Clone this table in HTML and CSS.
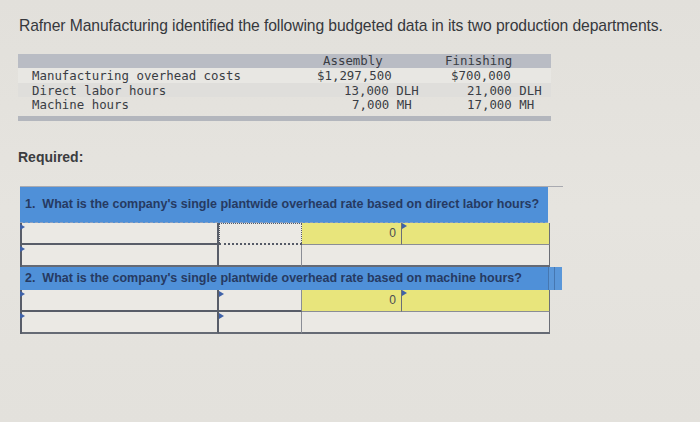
FILE: index.html
```html
<!DOCTYPE html>
<html>
<head>
<meta charset="utf-8">
<link rel="stylesheet" href="styles.css">
</head>
<body>
<p class="title">Rafner Manufacturing identified the following budgeted data in its two production departments.</p>

<div class="data">
  <div class="data-head">
    <span class="c-label"></span>
    <span class="c-asm i-asm-h">Assembly</span>
    <span class="c-fin i-fin-h">Finishing</span>
  </div>
  <div class="data-row">
    <span class="c-label">Manufacturing overhead costs</span>
    <span class="c-asm i-asm-1">$1,297,500</span>
    <span class="c-fin i-fin-1">$700,000</span>
  </div>
  <div class="data-row">
    <span class="c-label">Direct labor hours</span>
    <span class="c-asm i-asm-2">13,000 DLH</span>
    <span class="c-fin i-fin-2">21,000 DLH</span>
  </div>
  <div class="data-row">
    <span class="c-label">Machine hours</span>
    <span class="c-asm i-asm-3">7,000 MH</span>
    <span class="c-fin i-fin-3">17,000 MH</span>
  </div>
  <div class="data-foot"></div>
</div>

<p class="required">Required:</p>

<div class="question q1">
  <div class="q-head q-head-tall">1.&nbsp; What is the company's single plantwide overhead rate based on direct labor hours?</div>
  <div class="q-grid">
    <div class="cell c1 light-bottom marker"></div>
    <div class="cell c2 focus"></div>
    <div class="cell c3 yellow">0</div>
    <div class="cell c4 yellow marker"></div>
    <div class="cell c1 marker last"></div>
    <div class="cell c2 marker-off last"></div>
    <div class="cell c34 last"></div>
  </div>
</div>

<div class="question q2">
  <div class="q-head-wrap">
    <div class="q-head">2.&nbsp; What is the company's single plantwide overhead rate based on machine hours?</div>
    <div class="q-head-extra"><span></span><span></span></div>
  </div>
  <div class="q-grid">
    <div class="cell c1 marker"></div>
    <div class="cell c2 marker"></div>
    <div class="cell c3 yellow">0</div>
    <div class="cell c4 yellow marker"></div>
    <div class="cell c1 marker last"></div>
    <div class="cell c2 marker last"></div>
    <div class="cell c34 last"></div>
  </div>
</div>
</body>
</html>
```

FILE: styles.css
```css
html, body {
  margin: 0;
  padding: 0;
}
body {
  width: 700px;
  height: 422px;
  overflow: hidden;
  background: linear-gradient(180deg, #e2e0db 0%, #e6e4df 50%, #e3e1dc 100%);
  font-family: "Liberation Sans", Arial, sans-serif;
  color: #333;
}
.title {
  margin: 0;
  padding: 17px 0 0 19px;
  font-size: 15.7px;
  line-height: 18px;
  color: #36383d;
  letter-spacing: -0.1px;
}

/* data table */
.data {
  margin: 19px 0 0 18px;
  width: 533px;
  font-family: "DejaVu Sans Mono", monospace;
  font-size: 12.4px;
  color: #3a3d44;
}
.data-head, .data-row {
  display: grid;
  grid-template-columns: 282px 130px 121px;
  height: 14.5px;
  line-height: 14.5px;
  white-space: pre;
}
.data-head {
  background: #b9bcc4;
  height: 14px;
  line-height: 13px;
}
.data-row {
  line-height: 16px;
}
.data-row:nth-of-type(2) {
  background: #e8e7e3;
}
.data-row:nth-of-type(3) {
  background: #dfdedb;
}
.c-label {
  padding-left: 14px;
}
.i-asm-h { padding-left: 23px; }
.i-asm-1 { padding-left: 17px; }
.i-asm-2 { padding-left: 44px; }
.i-asm-3 { padding-left: 52px; }
.i-fin-h { padding-left: 15px; }
.i-fin-1 { padding-left: 21px; }
.i-fin-2 { padding-left: 37px; }
.i-fin-3 { padding-left: 37px; }
.data-foot {
  margin-top: 4px;
  height: 5px;
  background: #b3b6bd;
}

.required {
  margin: 28px 0 0 18px;
  font-size: 14px;
  font-weight: bold;
  color: #3b3c40;
  line-height: 16px;
}

/* questions */
.question {
  margin-left: 20px;
  width: 528px;
}
.q1 {
  margin-top: 21px;
  border-top: 1px solid #a9aab0;
  width: 543px;
}
.q1 .q-head, .q1 .q-grid {
  width: 528px;
}
.q-head {
  background: #4f90d8;
  color: #263a62;
  font-weight: bold;
  font-size: 12.5px;
  padding-left: 5px;
  box-sizing: border-box;
  height: 23px;
  line-height: 23px;
  white-space: nowrap;
  overflow: hidden;
}
.q-head-tall {
  height: 36px;
  line-height: 35px;
  border-bottom: 1px dashed #8aa0c0;
}
.q-head-wrap {
  display: flex;
  width: 542px;
}
.q-head-wrap .q-head {
  width: 528px;
  flex: none;
}
.q-head-extra {
  flex: 1;
  background: #5a97d9;
  display: flex;
  gap: 5px;
}
.q-head-extra span {
  width: 1px;
  background: #4677b0;
}
.q-grid {
  display: grid;
  grid-template-columns: 197px 83px 100px 148px;
  grid-auto-rows: 22px;
  border-left: 2px solid #585d68;
  box-sizing: border-box;
}
.cell {
  position: relative;
  background: #ebe9e4;
  border-right: 1px solid #8a8d95;
  border-bottom: 2px solid #585d68;
  box-sizing: border-box;
}
.c1 {
  border-right: 2px solid #585d68;
}
.c3 {
  text-align: right;
  padding-right: 5px;
  font-size: 12px;
  line-height: 20px;
  color: #4a4c52;
  border-right: 1.5px solid #6b6e76;
  border-bottom: 1px solid #8a8d95;
}
.c4 {
  border-bottom: 1px solid #8a8d95;
  border-right: 1.5px solid #6b6e76;
}
.c34 {
  grid-column: span 2;
  border-right: 1.5px solid #6b6e76;
}
.yellow {
  background: #e8e57c;
}
.light-bottom {
  border-bottom: 2px solid #585d68;
}
.focus {
  border: 1px dotted #555a66;
  border-bottom: 2px dotted #555a66;
}
.last {
  border-bottom: 2px solid #656a74;
}
.marker::before {
  content: "";
  position: absolute;
  left: 0;
  top: 1px;
  border-left: 5px solid #3f62a8;
  border-top: 3px solid transparent;
  border-bottom: 3px solid transparent;
}
.c1.marker::before {
  left: -2px;
}
.c4.marker::before {
  left: 0;
  top: 0;
}
```
